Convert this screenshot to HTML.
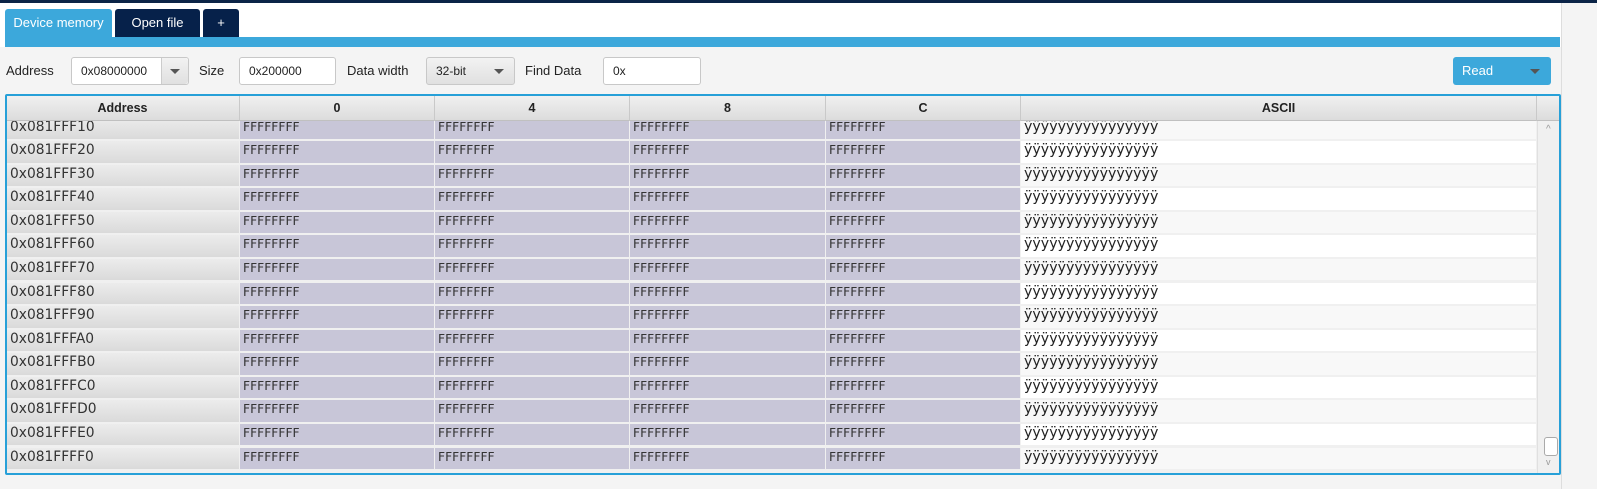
<!DOCTYPE html>
<html><head><meta charset="utf-8"><style>
*{box-sizing:border-box;margin:0;padding:0}
body{width:1597px;height:489px;background:#f4f4f4;font-family:"Liberation Sans","DejaVu Sans",sans-serif;position:relative;overflow:hidden}
.abs{position:absolute}
.tab{position:absolute;top:9px;height:28px;color:#fff;font-size:13px;line-height:28px;text-align:center;border-radius:3px 3px 0 0}
.lbl{position:absolute;top:63px;font-size:13px;color:#222}
.inp{position:absolute;top:57px;height:28px;background:#fff;border:1px solid #c8c8c8;border-radius:3px;font-size:12px;line-height:27px;padding-left:9px;color:#222}
.combo{background:linear-gradient(#f2f2f2,#e0e0e0)}
.arr{position:absolute;width:0;height:0;border-left:5px solid transparent;border-right:5px solid transparent;border-top:5px solid #555}
.hd{position:absolute;top:96px;height:25px;background:linear-gradient(#f0f0f0,#dcdcdc);border-right:1px solid #c9c9c9;border-bottom:1px solid #c0c0c0;font-weight:bold;font-size:12.5px;text-align:center;line-height:25px;color:#222}
.row{position:absolute;left:6px;width:1530px;height:23.57px}
.row div{position:absolute;top:1px;bottom:1px;font-family:"DejaVu Sans",sans-serif;font-size:12.3px;color:#333;padding-left:3px;line-height:18px;overflow:hidden}
.a{left:0;width:233px;background:linear-gradient(#ececec,#dadada);font-size:13.8px!important;padding-left:4px!important}
.d{background:#c8c6d8}
.c0{left:234px;width:194px}.c1{left:429px;width:194px}.c2{left:624px;width:195px}.c3{left:820px;width:194px}
.s{left:1015px;width:515px;font-size:14.2px!important;color:#222!important}
</style></head><body>
<div class="abs" style="left:0;top:0;width:1597px;height:3px;background:#0b2447"></div>
<div class="abs" style="left:0;top:3px;width:1562px;height:44px;background:#fff"></div>
<div class="tab" style="left:5px;width:107px;background:#3ca8db">Device memory</div>
<div class="tab" style="left:115px;width:85px;background:#06214a">Open file</div>
<div class="tab" style="left:203px;width:36px;background:#06214a">+</div>
<div class="abs" style="left:5px;top:37px;width:1555px;height:10px;background:#3ca8db"></div>
<div class="abs" style="left:1561px;top:3px;width:1px;height:486px;background:#ddd"></div>
<div class="lbl" style="left:6px">Address</div>
<div class="inp" style="left:71px;width:118px">0x08000000</div>
<div class="abs combo" style="left:161px;top:58px;width:27px;height:26px;border-left:1px solid #ccc;border-radius:0 3px 3px 0"></div>
<div class="arr" style="left:170px;top:69px"></div>
<div class="lbl" style="left:199px">Size</div>
<div class="inp" style="left:239px;width:97px">0x200000</div>
<div class="lbl" style="left:347px">Data width</div>
<div class="inp combo" style="left:426px;width:89px">32-bit</div>
<div class="arr" style="left:494px;top:69px"></div>
<div class="lbl" style="left:525px">Find Data</div>
<div class="inp" style="left:603px;width:98px">0x</div>
<div class="abs" style="left:1453px;top:57px;width:98px;height:28px;background:#3ca8db;border-radius:3px;color:#fff;font-size:13px;line-height:28px;padding-left:9px">Read</div>
<div class="arr" style="left:1530px;top:69px;border-top-color:#555"></div>
<div class="abs" style="left:5px;top:94px;width:1556px;height:381px;border:2px solid #27a0d8;background:#f0f0f0;border-radius:2px;overflow:hidden">
<div class="abs" style="left:-7px;top:-96px;width:1597px;height:489px">
<div class="hd" style="left:6px;width:234px">Address</div>
<div class="hd" style="left:240px;width:195px">0</div>
<div class="hd" style="left:435px;width:195px">4</div>
<div class="hd" style="left:630px;width:196px">8</div>
<div class="hd" style="left:826px;width:195px">C</div>
<div class="hd" style="left:1021px;width:516px">ASCII</div>
<div class="hd" style="left:1537px;width:24px"></div>
<div class="abs" style="left:6px;top:121px;width:1531px;height:353px;overflow:hidden">
<div class="abs" style="left:-6px;top:-121px;width:1597px;height:489px">
<div class="row" style="top:116.5px"><div class="a">0x081FFF10</div><div class="d c0">FFFFFFFF</div><div class="d c1">FFFFFFFF</div><div class="d c2">FFFFFFFF</div><div class="d c3">FFFFFFFF</div><div class="s" style="background:#f8f8f8">ÿÿÿÿÿÿÿÿÿÿÿÿÿÿÿÿ</div></div>
<div class="row" style="top:140.1px"><div class="a">0x081FFF20</div><div class="d c0">FFFFFFFF</div><div class="d c1">FFFFFFFF</div><div class="d c2">FFFFFFFF</div><div class="d c3">FFFFFFFF</div><div class="s" style="background:#fff">ÿÿÿÿÿÿÿÿÿÿÿÿÿÿÿÿ</div></div>
<div class="row" style="top:163.6px"><div class="a">0x081FFF30</div><div class="d c0">FFFFFFFF</div><div class="d c1">FFFFFFFF</div><div class="d c2">FFFFFFFF</div><div class="d c3">FFFFFFFF</div><div class="s" style="background:#f8f8f8">ÿÿÿÿÿÿÿÿÿÿÿÿÿÿÿÿ</div></div>
<div class="row" style="top:187.2px"><div class="a">0x081FFF40</div><div class="d c0">FFFFFFFF</div><div class="d c1">FFFFFFFF</div><div class="d c2">FFFFFFFF</div><div class="d c3">FFFFFFFF</div><div class="s" style="background:#fff">ÿÿÿÿÿÿÿÿÿÿÿÿÿÿÿÿ</div></div>
<div class="row" style="top:210.8px"><div class="a">0x081FFF50</div><div class="d c0">FFFFFFFF</div><div class="d c1">FFFFFFFF</div><div class="d c2">FFFFFFFF</div><div class="d c3">FFFFFFFF</div><div class="s" style="background:#f8f8f8">ÿÿÿÿÿÿÿÿÿÿÿÿÿÿÿÿ</div></div>
<div class="row" style="top:234.4px"><div class="a">0x081FFF60</div><div class="d c0">FFFFFFFF</div><div class="d c1">FFFFFFFF</div><div class="d c2">FFFFFFFF</div><div class="d c3">FFFFFFFF</div><div class="s" style="background:#fff">ÿÿÿÿÿÿÿÿÿÿÿÿÿÿÿÿ</div></div>
<div class="row" style="top:257.9px"><div class="a">0x081FFF70</div><div class="d c0">FFFFFFFF</div><div class="d c1">FFFFFFFF</div><div class="d c2">FFFFFFFF</div><div class="d c3">FFFFFFFF</div><div class="s" style="background:#f8f8f8">ÿÿÿÿÿÿÿÿÿÿÿÿÿÿÿÿ</div></div>
<div class="row" style="top:281.5px"><div class="a">0x081FFF80</div><div class="d c0">FFFFFFFF</div><div class="d c1">FFFFFFFF</div><div class="d c2">FFFFFFFF</div><div class="d c3">FFFFFFFF</div><div class="s" style="background:#fff">ÿÿÿÿÿÿÿÿÿÿÿÿÿÿÿÿ</div></div>
<div class="row" style="top:305.1px"><div class="a">0x081FFF90</div><div class="d c0">FFFFFFFF</div><div class="d c1">FFFFFFFF</div><div class="d c2">FFFFFFFF</div><div class="d c3">FFFFFFFF</div><div class="s" style="background:#f8f8f8">ÿÿÿÿÿÿÿÿÿÿÿÿÿÿÿÿ</div></div>
<div class="row" style="top:328.6px"><div class="a">0x081FFFA0</div><div class="d c0">FFFFFFFF</div><div class="d c1">FFFFFFFF</div><div class="d c2">FFFFFFFF</div><div class="d c3">FFFFFFFF</div><div class="s" style="background:#fff">ÿÿÿÿÿÿÿÿÿÿÿÿÿÿÿÿ</div></div>
<div class="row" style="top:352.2px"><div class="a">0x081FFFB0</div><div class="d c0">FFFFFFFF</div><div class="d c1">FFFFFFFF</div><div class="d c2">FFFFFFFF</div><div class="d c3">FFFFFFFF</div><div class="s" style="background:#f8f8f8">ÿÿÿÿÿÿÿÿÿÿÿÿÿÿÿÿ</div></div>
<div class="row" style="top:375.8px"><div class="a">0x081FFFC0</div><div class="d c0">FFFFFFFF</div><div class="d c1">FFFFFFFF</div><div class="d c2">FFFFFFFF</div><div class="d c3">FFFFFFFF</div><div class="s" style="background:#fff">ÿÿÿÿÿÿÿÿÿÿÿÿÿÿÿÿ</div></div>
<div class="row" style="top:399.3px"><div class="a">0x081FFFD0</div><div class="d c0">FFFFFFFF</div><div class="d c1">FFFFFFFF</div><div class="d c2">FFFFFFFF</div><div class="d c3">FFFFFFFF</div><div class="s" style="background:#f8f8f8">ÿÿÿÿÿÿÿÿÿÿÿÿÿÿÿÿ</div></div>
<div class="row" style="top:422.9px"><div class="a">0x081FFFE0</div><div class="d c0">FFFFFFFF</div><div class="d c1">FFFFFFFF</div><div class="d c2">FFFFFFFF</div><div class="d c3">FFFFFFFF</div><div class="s" style="background:#fff">ÿÿÿÿÿÿÿÿÿÿÿÿÿÿÿÿ</div></div>
<div class="row" style="top:446.5px"><div class="a">0x081FFFF0</div><div class="d c0">FFFFFFFF</div><div class="d c1">FFFFFFFF</div><div class="d c2">FFFFFFFF</div><div class="d c3">FFFFFFFF</div><div class="s" style="background:#f8f8f8">ÿÿÿÿÿÿÿÿÿÿÿÿÿÿÿÿ</div></div>
</div></div>
<div class="abs" style="left:1537px;top:121px;width:23px;height:353px;background:#f0f0f0;border-left:1px solid #e0e0e0"></div>
<div class="abs" style="left:1546px;top:124px;font-size:10px;color:#999">^</div>
<div class="abs" style="left:1546px;top:457px;font-size:9px;color:#999">v</div>
<div class="abs" style="left:1544px;top:437px;width:14px;height:19px;background:#fff;border:1px solid #aaa;border-radius:3px"></div>
</div></div>
</body></html>
